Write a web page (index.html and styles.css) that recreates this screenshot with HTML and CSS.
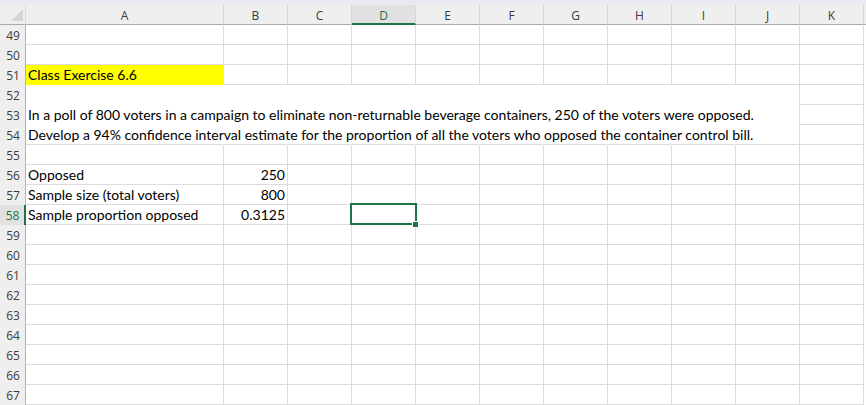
FILE: index.html
```html
<!DOCTYPE html>
<html>
<head>
<meta charset="utf-8">
<title>Class Exercise 6.6</title>
<link rel="stylesheet" href="styles.css">
</head>
<body>
<div class="topbar"></div>
<div class="grid">
  <div class="corner"><svg width="12" height="12" viewBox="0 0 12 12"><polygon points="12,0 12,12 0,12" fill="#d5d5d5"/></svg></div>
  <div class="ch">A</div><div class="ch">B</div><div class="ch">C</div><div class="ch act">D</div><div class="ch">E</div><div class="ch">F</div><div class="ch">G</div><div class="ch">H</div><div class="ch">I</div><div class="ch">J</div><div class="ch">K</div><div class="ch fill"></div>

  <div class="rh">49</div><div class="c"></div><div class="c"></div><div class="c"></div><div class="c"></div><div class="c"></div><div class="c"></div><div class="c"></div><div class="c"></div><div class="c"></div><div class="c"></div><div class="c"></div><div class="f"></div>
  <div class="rh">50</div><div class="c"></div><div class="c"></div><div class="c"></div><div class="c"></div><div class="c"></div><div class="c"></div><div class="c"></div><div class="c"></div><div class="c"></div><div class="c"></div><div class="c"></div><div class="f"></div>
  <div class="rh">51</div><div class="c yel">Class Exercise 6.6</div><div class="c"></div><div class="c"></div><div class="c"></div><div class="c"></div><div class="c"></div><div class="c"></div><div class="c"></div><div class="c"></div><div class="c"></div><div class="c"></div><div class="f"></div>
  <div class="rh">52</div><div class="c wf"></div><div class="c wf"></div><div class="c wf"></div><div class="c wf"></div><div class="c wf"></div><div class="c wf"></div><div class="c wf"></div><div class="c wf"></div><div class="c wf"></div><div class="c wfr"></div><div class="c"></div><div class="f"></div>
  <div class="rh">53</div><div class="c wf">In a poll of 800 voters in a campaign to eliminate non-returnable beverage containers, 250 of the voters were opposed.</div><div class="c wf"></div><div class="c wf"></div><div class="c wf"></div><div class="c wf"></div><div class="c wf"></div><div class="c wf"></div><div class="c wf"></div><div class="c wf"></div><div class="c wfr"></div><div class="c"></div><div class="f"></div>
  <div class="rh">54</div><div class="c wfb">Develop a 94% confidence interval estimate for the proportion of all the voters who opposed the container control bill.</div><div class="c wfb"></div><div class="c wfb"></div><div class="c wfb"></div><div class="c wfb"></div><div class="c wfb"></div><div class="c wfb"></div><div class="c wfb"></div><div class="c wfb"></div><div class="c"></div><div class="c"></div><div class="f"></div>
  <div class="rh">55</div><div class="c"></div><div class="c"></div><div class="c"></div><div class="c"></div><div class="c"></div><div class="c"></div><div class="c"></div><div class="c"></div><div class="c"></div><div class="c"></div><div class="c"></div><div class="f"></div>
  <div class="rh">56</div><div class="c">Opposed</div><div class="c num">250</div><div class="c"></div><div class="c"></div><div class="c"></div><div class="c"></div><div class="c"></div><div class="c"></div><div class="c"></div><div class="c"></div><div class="c"></div><div class="f"></div>
  <div class="rh">57</div><div class="c">Sample size (total voters)</div><div class="c num">800</div><div class="c"></div><div class="c"></div><div class="c"></div><div class="c"></div><div class="c"></div><div class="c"></div><div class="c"></div><div class="c"></div><div class="c"></div><div class="f"></div>
  <div class="rh act">58</div><div class="c">Sample proportion opposed</div><div class="c num">0.3125</div><div class="c"></div><div class="c sel"><div class="selbox"><div class="handle"></div></div></div><div class="c"></div><div class="c"></div><div class="c"></div><div class="c"></div><div class="c"></div><div class="c"></div><div class="c"></div><div class="f"></div>
  <div class="rh">59</div><div class="c"></div><div class="c"></div><div class="c"></div><div class="c"></div><div class="c"></div><div class="c"></div><div class="c"></div><div class="c"></div><div class="c"></div><div class="c"></div><div class="c"></div><div class="f"></div>
  <div class="rh">60</div><div class="c"></div><div class="c"></div><div class="c"></div><div class="c"></div><div class="c"></div><div class="c"></div><div class="c"></div><div class="c"></div><div class="c"></div><div class="c"></div><div class="c"></div><div class="f"></div>
  <div class="rh">61</div><div class="c"></div><div class="c"></div><div class="c"></div><div class="c"></div><div class="c"></div><div class="c"></div><div class="c"></div><div class="c"></div><div class="c"></div><div class="c"></div><div class="c"></div><div class="f"></div>
  <div class="rh">62</div><div class="c"></div><div class="c"></div><div class="c"></div><div class="c"></div><div class="c"></div><div class="c"></div><div class="c"></div><div class="c"></div><div class="c"></div><div class="c"></div><div class="c"></div><div class="f"></div>
  <div class="rh">63</div><div class="c"></div><div class="c"></div><div class="c"></div><div class="c"></div><div class="c"></div><div class="c"></div><div class="c"></div><div class="c"></div><div class="c"></div><div class="c"></div><div class="c"></div><div class="f"></div>
  <div class="rh">64</div><div class="c"></div><div class="c"></div><div class="c"></div><div class="c"></div><div class="c"></div><div class="c"></div><div class="c"></div><div class="c"></div><div class="c"></div><div class="c"></div><div class="c"></div><div class="f"></div>
  <div class="rh">65</div><div class="c"></div><div class="c"></div><div class="c"></div><div class="c"></div><div class="c"></div><div class="c"></div><div class="c"></div><div class="c"></div><div class="c"></div><div class="c"></div><div class="c"></div><div class="f"></div>
  <div class="rh">66</div><div class="c"></div><div class="c"></div><div class="c"></div><div class="c"></div><div class="c"></div><div class="c"></div><div class="c"></div><div class="c"></div><div class="c"></div><div class="c"></div><div class="c"></div><div class="f"></div>
  <div class="rh">67</div><div class="c"></div><div class="c"></div><div class="c"></div><div class="c"></div><div class="c"></div><div class="c"></div><div class="c"></div><div class="c"></div><div class="c"></div><div class="c"></div><div class="c"></div><div class="f"></div>
</div>
</body>
</html>
```
FILE: styles.css
```css
* { box-sizing: border-box; }
html, body { margin: 0; padding: 0; background: #fff; overflow: hidden; }
body { width: 866px; height: 405px; }

.topbar { height: 5px; background: #e8eaef; }

.grid {
  display: grid;
  grid-template-columns: 26px 198px repeat(10, 64px) 1fr;
  grid-auto-rows: 20px;
}

.corner {
  background: #efefef;
  border-right: 1px solid #dadada;
  border-bottom: 1px solid #ababab;
  display: flex;
  justify-content: flex-end;
  align-items: flex-end;
  padding: 0 2px 3px 0;
}
.corner svg { display: block; }

.ch {
  background: #efefef;
  border-right: 1px solid #d6d6d6;
  border-bottom: 1px solid #ababab;
  font: 12px "Open Sans", "Noto Sans", sans-serif;
  color: #3c3c3c;
  display: flex;
  align-items: center;
  justify-content: center;
  padding-top: 1px;
}
.ch.fill { border-right: none; }
.ch.act {
  background: #e1e1e1;
  color: #1e7145;
  border-bottom: 2px solid #217346;
  padding-top: 2px;
}

.rh {
  background: #efefef;
  border-right: 1px solid #b4b4b4;
  font: 12px "Open Sans", "Noto Sans", sans-serif;
  color: #3c3c3c;
  display: flex;
  align-items: center;
  justify-content: center;
  padding-left: 1px;
}
.rh.act {
  background: #e1e1e1;
  color: #217346;
  border-right: 2px solid #217346;
}

.c {
  border-right: 1px solid #dcdcdc;
  border-bottom: 1px solid #dcdcdc;
  font: 14px "Lato", "Liberation Sans", sans-serif;
  line-height: 19px;
  color: #000;
  padding: 0 2px 0 2px;
  white-space: nowrap;
}
.num { text-align: right; padding-right: 2px; }

.yel { background: #ffff00; border-color: transparent; }
.wf { border-color: transparent; }
.wfr { border-bottom-color: transparent; }
.wfb { border-right-color: transparent; }

.f { background: #fff; }

.sel { position: relative; }
.selbox {
  position: absolute;
  left: -2px;
  top: -2px;
  width: 67px;
  height: 22px;
  border: 2px solid #217346;
}
.handle {
  position: absolute;
  left: 60px;
  top: 16px;
  width: 7px;
  height: 7px;
  background: #217346;
  border: 1px solid #fff;
}
```
